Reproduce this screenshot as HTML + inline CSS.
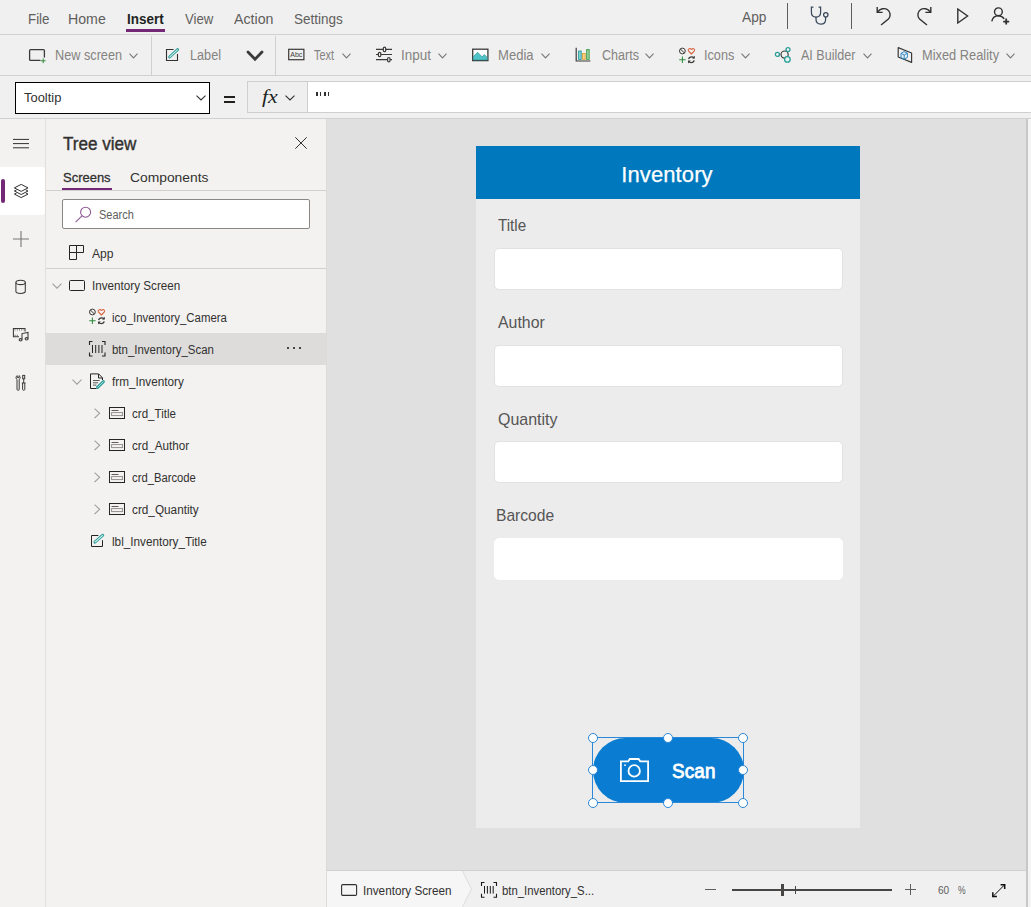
<!DOCTYPE html>
<html>
<head>
<meta charset="utf-8">
<title>Power Apps</title>
<style>
*{box-sizing:border-box;margin:0;padding:0}
html,body{width:1031px;height:907px;overflow:hidden;background:#f3f2f1;font-family:"Liberation Sans",sans-serif;color:#323130}
.abs{position:absolute}
.t{position:absolute;white-space:nowrap;line-height:1}
svg{position:absolute;overflow:visible}
#menubar{left:0;top:0;width:1031px;height:35px;background:#f0f0f0;border-bottom:1px solid #d2d0ce}
#ribbon{left:0;top:35px;width:1031px;height:41px;background:#f0f0f0;border-bottom:1px solid #d2d0ce}
#fbar{left:0;top:76px;width:1031px;height:43px;background:#f0f0f0;border-bottom:1px solid #d2d0ce}
.m{font-size:14px;color:#605e5c;top:12px}
.r{font-size:14px;color:#858381;top:48px}
.vsep{position:absolute;width:1px;background:#d2d0ce}
.cv{width:9px;height:6px}
#rail{left:0;top:119px;width:46px;height:788px;background:#f3f2f1;border-right:1px solid #e1dfdd}
#tree{left:46px;top:119px;width:281px;height:788px;background:#f3f2f1;border-right:1px solid #dddbd9}
.row{font-size:12.5px;color:#323130}
#canvas{left:327px;top:119px;width:704px;height:752px;background:#e0e0e0}
#status{left:327px;top:870px;width:704px;height:37px;background:#f0f0f0;border-top:1px solid #d2d0ce}
#screen{left:476px;top:146px;width:384px;height:682px;background:#ececec}
#hdr{left:476px;top:146px;width:384px;height:53px;background:#0078bd}
.inp{position:absolute;left:494px;width:349px;height:42px;background:#fff;border:1px solid #e2e2e2;border-radius:5px}
.fl{font-size:17px;color:#555;left:497px}
.h{position:absolute;width:10px;height:10px;border-radius:50%;background:#fff;border:1.2px solid #2b88d8}
</style>
</head>
<body>
<svg width="0" height="0" style="left:-10px;top:-10px"><defs>
<path id="chev" d="M0.5 0.7 L4.5 4.9 L8.5 0.7" fill="none" stroke-width="1.1"/>
</defs></svg>

<!-- MENU BAR -->
<div id="menubar" class="abs"></div>
<div class="t m" style="left:27.6px;transform:scaleX(0.952);transform-origin:0 0">File</div>
<div class="t m" style="left:68.2px;transform:scaleX(1.011);transform-origin:0 0">Home</div>
<div class="t m" style="left:127.4px;font-weight:bold;color:#201f1e;transform:scaleX(0.961);transform-origin:0 0">Insert</div>
<div class="abs" style="left:126px;top:29px;width:39px;height:3px;background:#742774"></div>
<div class="t m" style="left:185.2px;transform:scaleX(0.939);transform-origin:0 0">View</div>
<div class="t m" style="left:234.2px;transform:scaleX(1.014);transform-origin:0 0">Action</div>
<div class="t m" style="left:294.2px;transform:scaleX(0.963);transform-origin:0 0">Settings</div>
<div class="t m" style="left:741.6px;top:10px;transform:scaleX(0.979);transform-origin:0 0">App</div>
<div class="vsep" style="left:787px;top:3px;height:26px;background:#605e5c"></div>
<div class="vsep" style="left:851px;top:3px;height:26px;background:#605e5c"></div>
<!-- stethoscope -->
<svg style="left:810px;top:6px" width="20" height="19" viewBox="0 0 20 19">
<g fill="none" stroke="#3a4a5c" stroke-width="1.25" stroke-linecap="round">
<path d="M3 1 H1.4 V6.2 C1.4 9.4 3.6 11 6 11 C8.4 11 10.6 9.4 10.6 6.2 V1 H9"/>
<path d="M6 11 V13.2 C6 16.4 8 18 10.8 18 C13.6 18 15.6 16.2 15.6 13.4 V11.2"/>
<circle cx="15.8" cy="8.8" r="2.2"/>
</g></svg>
<!-- undo -->
<svg style="left:876px;top:6px" width="16" height="20" viewBox="0 0 16 20">
<g fill="none" stroke="#323130" stroke-width="1.4" stroke-linecap="butt">
<path d="M1.2 1 V6.4 H6.6"/>
<path d="M1.6 6 C4 2.6 8.6 1.6 11.6 3.8 C14.6 6 15 10 12.4 13 L5 19"/>
</g></svg>
<!-- redo -->
<svg style="left:916px;top:6px" width="16" height="20" viewBox="0 0 16 20">
<g fill="none" stroke="#323130" stroke-width="1.4" stroke-linecap="butt" transform="translate(16,0) scale(-1,1)">
<path d="M1.2 1 V6.4 H6.6"/>
<path d="M1.6 6 C4 2.6 8.6 1.6 11.6 3.8 C14.6 6 15 10 12.4 13 L5 19"/>
</g></svg>
<!-- play -->
<svg style="left:957px;top:8px" width="12" height="16" viewBox="0 0 12 16">
<path d="M0.8 1 L10.6 8 L0.8 15 Z" fill="none" stroke="#323130" stroke-width="1.4" stroke-linejoin="miter"/></svg>
<!-- user+ -->
<svg style="left:991px;top:7px" width="20" height="19" viewBox="0 0 20 19">
<g fill="none" stroke="#323130" stroke-width="1.4">
<circle cx="7.4" cy="4.8" r="3.9"/>
<path d="M0.8 14.4 C1.6 10.6 4.2 8.8 7.4 8.8 C10 8.8 12 10 13.2 12"/>
</g>
<path d="M15.2 11.6 V17.6 M12.2 14.6 H18.2" stroke="#323130" stroke-width="1.8" fill="none"/>
</svg>

<!-- RIBBON -->
<div id="ribbon" class="abs"></div>
<!-- new screen icon -->
<svg style="left:28px;top:48px" width="18" height="16" viewBox="0 0 18 16">
<path d="M12.5 12.4 H2.6 Q1.6 12.4 1.6 11.4 V2.6 Q1.6 1.6 2.6 1.6 H15.4 Q16.4 1.6 16.4 2.6 V9.5" fill="none" stroke="#3b3a39" stroke-width="1.3"/>
<path d="M15.2 10.4 V15.2 M12.8 12.8 H17.6" stroke="#2e8b3d" stroke-width="1" fill="none"/>
</svg>
<div class="t r" style="left:54.8px;transform:scaleX(0.907);transform-origin:0 0">New screen</div>
<svg class="cv" style="left:129px;top:53px" viewBox="0 0 9 6"><use href="#chev" stroke="#7a7876"/></svg>
<div class="vsep" style="left:151px;top:36px;height:39px"></div>
<!-- label icon -->
<svg style="left:165px;top:46px" width="16" height="17" viewBox="0 0 16 17">
<path d="M8.6 3.5 H1.5 V14.5 H12.5 V8" fill="none" stroke="#323130" stroke-width="1.1"/>
<path d="M4.6 11 L12.6 3.6" stroke="#2f9c98" stroke-width="2.9" stroke-linecap="round"/>
<path d="M4.8 10.8 L12.4 3.8" stroke="#c9efed" stroke-width="1.1" stroke-linecap="round"/>
</svg>
<div class="t r" style="left:189.6px;transform:scaleX(0.906);transform-origin:0 0">Label</div>
<svg style="left:246px;top:50px" width="18" height="12" viewBox="0 0 18 12">
<path d="M2 2 L9 9.2 L16 2" fill="none" stroke="#3b3a39" stroke-width="2.8" stroke-linecap="round" stroke-linejoin="miter"/></svg>
<div class="vsep" style="left:275px;top:36px;height:39px"></div>
<!-- text icon -->
<svg style="left:288px;top:48px" width="17" height="13" viewBox="0 0 17 13">
<rect x="0.7" y="1.3" width="15.2" height="10.4" fill="none" stroke="#3b3a39" stroke-width="1.2"/>
<text x="8.3" y="9" font-family="Liberation Sans" font-size="7" text-anchor="middle" fill="#3b3a39">Abc</text>
</svg>
<div class="t r" style="left:314.4px;transform:scaleX(0.781);transform-origin:0 0">Text</div>
<svg class="cv" style="left:342px;top:53px" viewBox="0 0 9 6"><use href="#chev" stroke="#7a7876"/></svg>
<!-- input icon -->
<svg style="left:375px;top:46px" width="18" height="17" viewBox="0 0 18 17">
<g stroke="#3b3a39" stroke-width="1.2" fill="#f3f2f1">
<path d="M1 3.4 H17 M1 8.5 H17 M1 13.7 H17"/>
<rect x="8.3" y="1.2" width="2.4" height="4.4" rx="1.2"/>
<rect x="3.4" y="6.3" width="2.4" height="4.4" rx="1.2"/>
<rect x="12.6" y="11.5" width="2.4" height="4.4" rx="1.2"/>
</g></svg>
<div class="t r" style="left:401.4px;transform:scaleX(0.964);transform-origin:0 0">Input</div>
<svg class="cv" style="left:438px;top:53px" viewBox="0 0 9 6"><use href="#chev" stroke="#7a7876"/></svg>
<!-- media icon -->
<svg style="left:472px;top:48px" width="17" height="14" viewBox="0 0 17 14">
<rect x="0.7" y="1.2" width="15.2" height="11.4" fill="#fff" stroke="#3b3a39" stroke-width="1.3"/>
<path d="M1.3 12 V8.6 L5.6 4.2 L10 8.8 L12.4 6.6 L15.3 9.6 V12 Z" fill="#4fc3c7" stroke="#2a8a8c" stroke-width="0.6"/>
</svg>
<div class="t r" style="left:497.6px;transform:scaleX(0.933);transform-origin:0 0">Media</div>
<svg class="cv" style="left:541px;top:53px" viewBox="0 0 9 6"><use href="#chev" stroke="#7a7876"/></svg>
<!-- charts icon -->
<svg style="left:575px;top:47px" width="16" height="15" viewBox="0 0 16 15">
<path d="M1.2 0.8 V14 H15.4" fill="none" stroke="#3b3a39" stroke-width="1.2"/>
<rect x="3.6" y="4" width="2.6" height="8.4" fill="#7fd3d3" stroke="#1f8f8f" stroke-width="0.8"/>
<rect x="7.6" y="6.4" width="2.6" height="6" fill="#f9d28a" stroke="#e09a2a" stroke-width="0.8"/>
<rect x="11.6" y="2.4" width="2.6" height="10" fill="#8fce98" stroke="#3a9a4a" stroke-width="0.8"/>
</svg>
<div class="t r" style="left:601.8px;transform:scaleX(0.898);transform-origin:0 0">Charts</div>
<svg class="cv" style="left:645px;top:53px" viewBox="0 0 9 6"><use href="#chev" stroke="#7a7876"/></svg>
<!-- icons icon -->
<svg style="left:678px;top:47px" width="18" height="17" viewBox="0 0 18 17">
<circle cx="4.4" cy="4" r="2.9" fill="none" stroke="#3b3a39" stroke-width="1"/>
<path d="M2.4 2 L6.4 6" stroke="#3b3a39" stroke-width="1"/>
<path d="M13.4 7 L10.4 3.8 C9.6 2.4 11.4 0.6 13.4 2.4 C15.4 0.6 17.2 2.4 16.4 3.8 Z" fill="none" stroke="#d9613c" stroke-width="1.1" stroke-linejoin="round"/>
<path d="M4.4 9.6 V16 M1.2 12.8 H7.6" stroke="#2e8b3d" stroke-width="1.05" fill="none"/>
<g fill="none" stroke="#3b3a39" stroke-width="1.25">
<path d="M10.6 12 C11 10.4 12.4 9.8 13.6 9.8 C14.8 9.8 15.6 10.2 16.2 11"/>
<path d="M16.2 13.4 C15.8 15 14.4 15.6 13.2 15.6 C12 15.6 11.2 15.2 10.6 14.4"/>
</g>
<path d="M16.8 8.8 V11.6 H14 Z M10 16.4 V13.6 H12.8 Z" fill="#3b3a39"/>
</svg>
<div class="t r" style="left:704.0px;transform:scaleX(0.906);transform-origin:0 0">Icons</div>
<svg class="cv" style="left:741px;top:53px" viewBox="0 0 9 6"><use href="#chev" stroke="#7a7876"/></svg>
<!-- ai builder icon -->
<svg style="left:774px;top:46px" width="19" height="18" viewBox="0 0 19 18">
<circle cx="10.6" cy="8.6" r="3.6" fill="none" stroke="#3b3a39" stroke-width="1.2"/>
<circle cx="3.4" cy="8.4" r="2" fill="#f3f2f1" stroke="#2a9d98" stroke-width="1.3"/>
<circle cx="14" cy="3.6" r="2" fill="#f3f2f1" stroke="#2a9d98" stroke-width="1.3"/>
<circle cx="13.4" cy="13.4" r="2.8" fill="#e7f6f5" stroke="#2a9d98" stroke-width="1.3"/>
</svg>
<div class="t r" style="left:801.2px;transform:scaleX(0.895);transform-origin:0 0">AI Builder</div>
<svg class="cv" style="left:863px;top:53px" viewBox="0 0 9 6"><use href="#chev" stroke="#7a7876"/></svg>
<!-- mixed reality icon -->
<svg style="left:897px;top:46px" width="16" height="18" viewBox="0 0 16 18">
<path d="M1.2 1.6 L14.6 7 V16.4 L1.2 11 Z" fill="none" stroke="#3b3a39" stroke-width="1.2" stroke-linejoin="round"/>
<path d="M4 7.4 L7 5.6 L10.4 7.2 V11.4 L7.2 13.2 L4 11.6 Z M4 7.4 L7.2 9 L10.4 7.2 M7.2 9 V13.2" fill="none" stroke="#2b88c8" stroke-width="1"/>
</svg>
<div class="t r" style="left:922.2px;transform:scaleX(0.917);transform-origin:0 0">Mixed Reality</div>
<svg class="cv" style="left:1006px;top:53px" viewBox="0 0 9 6"><use href="#chev" stroke="#7a7876"/></svg>

<!-- FORMULA BAR -->
<div id="fbar" class="abs"></div>
<div class="abs" style="left:15px;top:82px;width:195px;height:32px;background:#fff;border:1px solid #000"></div>
<div class="t" style="left:24.4px;top:91px;font-size:13px;color:#323130;transform:scaleX(0.994);transform-origin:0 0">Tooltip</div>
<svg style="left:196px;top:95px" width="10" height="6" viewBox="0 0 10 6"><path d="M0.5 0.6 L5 5 L9.5 0.6" fill="none" stroke="#323130" stroke-width="1.1"/></svg>
<div class="abs" style="left:224px;top:96px;width:11px;height:2px;background:#201f1e"></div>
<div class="abs" style="left:224px;top:101px;width:11px;height:2px;background:#201f1e"></div>
<div class="abs" style="left:247px;top:81px;width:61px;height:32px;background:#efefef;border:1px solid #cfcfcf"></div>
<div class="t" style="left:262px;top:87px;font-family:'Liberation Serif',serif;font-style:italic;font-size:19.5px;color:#201f1e;transform:scaleX(1.12);transform-origin:0 0">fx</div>
<svg style="left:284.5px;top:94.5px" width="10" height="6" viewBox="0 0 10 6"><path d="M0.5 0.6 L5 5 L9.5 0.6" fill="none" stroke="#323130" stroke-width="1.1"/></svg>
<div class="abs" style="left:307px;top:81px;width:724px;height:32px;background:#fff;border:1px solid #cfcfcf;border-right:0"></div>
<div class="abs" style="left:316px;top:92px;width:1.5px;height:3.5px;background:#323130"></div>
<div class="abs" style="left:319.5px;top:92px;width:1.5px;height:3.5px;background:#323130"></div>
<div class="abs" style="left:324px;top:92px;width:1.5px;height:3.5px;background:#323130"></div>
<div class="abs" style="left:327.5px;top:92px;width:1.5px;height:3.5px;background:#323130"></div>

<!-- LEFT RAIL -->
<div id="rail" class="abs"></div>
<div class="abs" style="left:0;top:167px;width:45px;height:48px;background:#fff;border-radius:0 3px 3px 0"></div>
<div class="abs" style="left:1.2px;top:179px;width:3.8px;height:24px;background:#742774;border-radius:2px"></div>
<!-- hamburger -->
<svg style="left:13px;top:138px" width="16" height="11" viewBox="0 0 16 11"><path d="M0 1.4 H16 M0 5.6 H16 M0 9.8 H16" stroke="#323130" stroke-width="1"/></svg>
<!-- layers -->
<svg style="left:13px;top:183px" width="17" height="16" viewBox="0 0 17 16">
<g fill="none" stroke="#323130" stroke-width="1" stroke-linejoin="round">
<path d="M8.2 1.4 L15 4.9 L8.2 8.4 L1.4 4.9 Z"/>
<path d="M3.6 6.9 L1.4 8 L8.2 11.5 L15 8 L12.8 6.9"/>
<path d="M3.6 10 L1.4 11.1 L8.2 14.6 L15 11.1 L12.8 10"/>
</g></svg>
<!-- plus -->
<svg style="left:13px;top:231px" width="16" height="16" viewBox="0 0 16 16"><path d="M8 0 V16 M0 8 H16" stroke="#797775" stroke-width="1.1"/></svg>
<!-- cylinder -->
<svg style="left:15px;top:279px" width="12" height="16" viewBox="0 0 12 16">
<g fill="none" stroke="#3b3a39" stroke-width="1.05">
<ellipse cx="5.6" cy="3.4" rx="4.7" ry="2.2"/>
<path d="M0.9 3.4 V12.2 C0.9 13.4 3 14.4 5.6 14.4 C8.2 14.4 10.3 13.4 10.3 12.2 V3.4"/>
</g></svg>
<!-- media -->
<svg style="left:12px;top:327px" width="18" height="16" viewBox="0 0 18 16">
<g fill="none" stroke="#3b3a39" stroke-width="1.05">
<path d="M7 9.8 H1.4 V1.4 H13 V4.6"/>
<path d="M2.6 2.9 H11.8 M2.6 8.3 H7" stroke-dasharray="1 1.2" stroke-width="0.9"/>
<path d="M10 12.4 V6.6 L16 5.4 V11.4"/>
<ellipse cx="8.6" cy="12.8" rx="1.5" ry="1.2"/>
<ellipse cx="14.6" cy="11.8" rx="1.5" ry="1.2"/>
</g></svg>
<!-- tools -->
<svg style="left:15px;top:374px" width="12" height="18" viewBox="0 0 12 18">
<g fill="none" stroke="#3b3a39" stroke-width="1">
<path d="M2.2 1.6 C0.6 2.4 0.6 4.8 2 5.4 V15.4 C2 16.6 4.2 16.6 4.2 15.4 V5.4 C5.6 4.8 5.6 2.4 4 1.6 V3.6 H2.2 Z"/>
<rect x="7.7" y="1.4" width="2" height="3.4"/>
<path d="M8.7 4.8 V9 M6.8 9 H10.6"/>
<path d="M7.6 9 V15.4 C7.6 16.6 9.8 16.6 9.8 15.4 V9"/>
</g></svg>

<!-- TREE VIEW -->
<div id="tree" class="abs"></div>
<div class="t" style="left:62.8px;top:135px;font-size:18px;font-weight:normal;-webkit-text-stroke:0.4px #323130;color:#323130;letter-spacing:0px;transform:scaleX(0.949);transform-origin:0 0">Tree view</div>
<svg style="left:295px;top:137px" width="12" height="12" viewBox="0 0 12 12"><path d="M0.3 0.3 L11.7 11.7 M11.7 0.3 L0.3 11.7" stroke="#323130" stroke-width="1"/></svg>
<div class="t" style="left:63.0px;top:171px;font-size:13.5px;font-weight:normal;-webkit-text-stroke:0.3px #323130;color:#323130;letter-spacing:0px;transform:scaleX(0.961);transform-origin:0 0">Screens</div>
<div class="abs" style="left:62px;top:188px;width:50px;height:2px;background:#742774"></div>
<div class="t" style="left:130.4px;top:171px;font-size:13.5px;color:#323130;transform:scaleX(1.025);transform-origin:0 0">Components</div>
<div class="abs" style="left:46px;top:190px;width:280px;height:1px;background:#d2d0ce"></div>
<div class="abs" style="left:62px;top:199px;width:248px;height:30px;background:#fff;border:1px solid #8a8886;border-radius:2px"></div>
<svg style="left:75px;top:206px" width="17" height="17" viewBox="0 0 17 17"><g fill="none" stroke="#8a5590" stroke-width="1.05"><circle cx="10.6" cy="6.2" r="5"/><path d="M7 9.8 L0.6 16.2"/></g></svg>
<div class="t" style="left:99.4px;top:209px;font-size:12px;color:#605e5c;transform:scaleX(0.916);transform-origin:0 0">Search</div>
<!-- app icon -->
<svg style="left:69px;top:245px" width="16" height="16" viewBox="0 0 16 16"><g fill="none" stroke="#252423" stroke-width="1"><path d="M0.5 0.5 H14.5 V7.5 H7.5 V14.5 H0.5 Z"/><path d="M7.5 0.5 V7.5 M0.5 7.5 H7.5"/></g></svg>
<div class="t row" style="left:92.4px;top:248px;transform:scaleX(0.969);transform-origin:0 0">App</div>
<div class="abs" style="left:46px;top:268px;width:280px;height:1px;background:#d2d0ce"></div>
<div class="abs" style="left:46px;top:333px;width:280px;height:32px;background:#dddcdb"></div>
<!-- Inventory Screen -->
<svg style="left:52px;top:283px" width="10" height="6" viewBox="0 0 10 6"><path d="M0.5 0.6 L5 5.2 L9.5 0.6" fill="none" stroke="#a19f9d" stroke-width="1.1"/></svg>
<svg style="left:69px;top:280px" width="17" height="12" viewBox="0 0 17 12"><rect x="0.5" y="0.5" width="15" height="10" rx="1" fill="none" stroke="#252423" stroke-width="1"/></svg>
<div class="t row" style="left:92.4px;top:280px;transform:scaleX(0.935);transform-origin:0 0">Inventory Screen</div>
<!-- ico row icon -->
<svg style="left:88px;top:308px" width="18" height="17" viewBox="0 0 18 17">
<circle cx="4.4" cy="4" r="2.9" fill="none" stroke="#3b3a39" stroke-width="1"/>
<path d="M2.4 2 L6.4 6" stroke="#3b3a39" stroke-width="1"/>
<path d="M13.4 7 L10.4 3.8 C9.6 2.4 11.4 0.6 13.4 2.4 C15.4 0.6 17.2 2.4 16.4 3.8 Z" fill="none" stroke="#d9613c" stroke-width="1.1" stroke-linejoin="round"/>
<path d="M4.4 9.6 V16 M1.2 12.8 H7.6" stroke="#2e8b3d" stroke-width="1.05" fill="none"/>
<g fill="none" stroke="#3b3a39" stroke-width="1.25">
<path d="M10.6 12 C11 10.4 12.4 9.8 13.6 9.8 C14.8 9.8 15.6 10.2 16.2 11"/>
<path d="M16.2 13.4 C15.8 15 14.4 15.6 13.2 15.6 C12 15.6 11.2 15.2 10.6 14.4"/>
</g>
<path d="M16.8 8.8 V11.6 H14 Z M10 16.4 V13.6 H12.8 Z" fill="#3b3a39"/>
</svg>
<div class="t row" style="left:112.4px;top:312px;transform:scaleX(0.914);transform-origin:0 0">ico_Inventory_Camera</div>
<!-- btn row icon -->
<svg style="left:89px;top:341px" width="17" height="16" viewBox="0 0 17 16">
<g fill="none" stroke="#252423" stroke-width="1">
<path d="M3.5 0.5 H0.5 V4 M13 0.5 H16 V4 M3.5 15 H0.5 V11.5 M13 15 H16 V11.5" stroke-width="1.1"/>
<path d="M3.5 4 V12 M6.7 4 V12 M9.9 4 V12 M13 4 V12"/>
</g></svg>
<div class="t row" style="left:112.4px;top:344px;transform:scaleX(0.917);transform-origin:0 0">btn_Inventory_Scan</div>
<div class="abs" style="left:287px;top:347px;width:2px;height:2px;background:#484644"></div>
<div class="abs" style="left:293px;top:347px;width:2px;height:2px;background:#484644"></div>
<div class="abs" style="left:299px;top:347px;width:2px;height:2px;background:#484644"></div>
<!-- frm row -->
<svg style="left:72px;top:379px" width="10" height="6" viewBox="0 0 10 6"><path d="M0.5 0.6 L5 5.2 L9.5 0.6" fill="none" stroke="#a19f9d" stroke-width="1.1"/></svg>
<svg style="left:90px;top:373px" width="16" height="17" viewBox="0 0 16 17">
<path d="M6.6 15.5 H0.5 V0.9 H8.6 L12.5 4.8 V7 M8.5 1 V5 H12.4" fill="none" stroke="#252423" stroke-width="1"/>
<path d="M3 7.5 H9.6 M3 9.8 H8 M3 12.1 H6.4" stroke="#484644" stroke-width="0.9"/>
<path d="M7.6 14.4 L13.4 8.6" stroke="#2f9c98" stroke-width="2.9" stroke-linecap="round"/>
<path d="M7.8 14.2 L13.2 8.8" stroke="#9fe0dc" stroke-width="1" stroke-linecap="round"/>
</svg>
<div class="t row" style="left:112.4px;top:376px;transform:scaleX(0.939);transform-origin:0 0">frm_Inventory</div>
<svg style="left:94px;top:408px" width="7" height="11" viewBox="0 0 7 11"><path d="M0.6 0.6 L5.6 5.3 L0.6 10" fill="none" stroke="#a19f9d" stroke-width="1.1"/></svg>
<svg style="left:109px;top:407px" width="17" height="12" viewBox="0 0 17 12"><g fill="none" stroke="#252423" stroke-width="1"><rect x="0.5" y="0.5" width="15" height="11"/><path d="M2.6 3.5 H9.4" stroke="#605e5c"/><rect x="2.6" y="5.6" width="11" height="3" stroke="#8a8886" stroke-width="0.9"/></g></svg>
<svg style="left:94px;top:440px" width="7" height="11" viewBox="0 0 7 11"><path d="M0.6 0.6 L5.6 5.3 L0.6 10" fill="none" stroke="#a19f9d" stroke-width="1.1"/></svg>
<svg style="left:109px;top:439px" width="17" height="12" viewBox="0 0 17 12"><g fill="none" stroke="#252423" stroke-width="1"><rect x="0.5" y="0.5" width="15" height="11"/><path d="M2.6 3.5 H9.4" stroke="#605e5c"/><rect x="2.6" y="5.6" width="11" height="3" stroke="#8a8886" stroke-width="0.9"/></g></svg>
<svg style="left:94px;top:472px" width="7" height="11" viewBox="0 0 7 11"><path d="M0.6 0.6 L5.6 5.3 L0.6 10" fill="none" stroke="#a19f9d" stroke-width="1.1"/></svg>
<svg style="left:109px;top:471px" width="17" height="12" viewBox="0 0 17 12"><g fill="none" stroke="#252423" stroke-width="1"><rect x="0.5" y="0.5" width="15" height="11"/><path d="M2.6 3.5 H9.4" stroke="#605e5c"/><rect x="2.6" y="5.6" width="11" height="3" stroke="#8a8886" stroke-width="0.9"/></g></svg>
<svg style="left:94px;top:504px" width="7" height="11" viewBox="0 0 7 11"><path d="M0.6 0.6 L5.6 5.3 L0.6 10" fill="none" stroke="#a19f9d" stroke-width="1.1"/></svg>
<svg style="left:109px;top:503px" width="17" height="12" viewBox="0 0 17 12"><g fill="none" stroke="#252423" stroke-width="1"><rect x="0.5" y="0.5" width="15" height="11"/><path d="M2.6 3.5 H9.4" stroke="#605e5c"/><rect x="2.6" y="5.6" width="11" height="3" stroke="#8a8886" stroke-width="0.9"/></g></svg>
<div class="t row" style="left:132.4px;top:408px;transform:scaleX(0.925);transform-origin:0 0">crd_Title</div>
<div class="t row" style="left:132.4px;top:440px;transform:scaleX(0.934);transform-origin:0 0">crd_Author</div>
<div class="t row" style="left:132.4px;top:472px;transform:scaleX(0.901);transform-origin:0 0">crd_Barcode</div>
<div class="t row" style="left:132.4px;top:504px;transform:scaleX(0.942);transform-origin:0 0">crd_Quantity</div>
<!-- lbl row -->
<svg style="left:91px;top:532px" width="15" height="16" viewBox="0 0 15 16">
<path d="M7.4 3.5 H0.5 V14.5 H11.5 V8.2" fill="none" stroke="#252423" stroke-width="1"/>
<path d="M3.9 10.2 L11.8 3.2" stroke="#2f9c98" stroke-width="2.9" stroke-linecap="round"/>
<path d="M4.1 10 L11.6 3.4" stroke="#c9efed" stroke-width="1.1" stroke-linecap="round"/>
</svg>
<div class="t row" style="left:112.4px;top:536px;transform:scaleX(0.938);transform-origin:0 0">lbl_Inventory_Title</div>

<!-- CANVAS -->
<div id="canvas" class="abs"></div>
<div id="screen" class="abs"></div>
<div id="hdr" class="abs"></div>
<div class="t" style="left:475px;width:384px;text-align:center;top:164px;font-size:22px;color:#fff;letter-spacing:0.1px;-webkit-text-stroke:0.25px #fff">Inventory</div>
<div class="t fl" style="left:497.8px;top:216.6px;transform:scaleX(0.895);transform-origin:0 0">Title</div>
<div class="inp" style="top:248px"></div>
<div class="t fl" style="left:497.8px;top:313.6px;transform:scaleX(0.933);transform-origin:0 0">Author</div>
<div class="inp" style="top:345px"></div>
<div class="t fl" style="left:497.8px;top:410.6px;transform:scaleX(0.939);transform-origin:0 0">Quantity</div>
<div class="inp" style="top:441px"></div>
<div class="t fl" style="left:496.2px;top:506.6px;transform:scaleX(0.919);transform-origin:0 0">Barcode</div>
<div class="inp" style="top:538px;border-color:#fff"></div>

<!-- SCAN BUTTON -->
<div class="abs" style="left:593px;top:737.5px;width:150.5px;height:65px;border-radius:32.5px;background:#0a7cd1"></div>
<svg style="left:620px;top:758px" width="29" height="25" viewBox="0 0 29 25">
<g fill="none" stroke="#fff" stroke-width="1.8" stroke-linejoin="miter">
<path d="M0.9 3.3 H8.2 L9.8 1 H18.6 L20.2 3.3 H28.1 V23.2 H0.9 Z"/>
<circle cx="14.2" cy="12.9" r="5.7"/>
</g><circle cx="5" cy="7.2" r="0.9" fill="#fff"/></svg>
<div class="t" style="left:672.4px;top:761px;font-size:20px;font-weight:normal;-webkit-text-stroke:0.8px #fff;color:#fff;letter-spacing:0.2px;transform:scaleX(0.942);transform-origin:0 0">Scan</div>
<div class="abs" style="left:592px;top:737px;width:151.5px;height:66px;border:1px solid #2b88d8"></div>
<div class="h" style="left:587.5px;top:732.5px"></div>
<div class="h" style="left:663px;top:732.5px"></div>
<div class="h" style="left:738px;top:732.5px"></div>
<div class="h" style="left:587.5px;top:765px"></div>
<div class="h" style="left:738px;top:765px"></div>
<div class="h" style="left:587.5px;top:797.5px"></div>
<div class="h" style="left:663px;top:797.5px"></div>
<div class="h" style="left:738px;top:797.5px"></div>

<!-- STATUS BAR -->
<div id="status" class="abs"></div>
<svg style="left:327px;top:871px" width="150" height="36" viewBox="0 0 150 36">
<path d="M0 0 H135.5 L144.5 18 L135.5 36 H0 Z" fill="#f6f6f6"/>
<path d="M135.5 0 L144.5 18 L135.5 36" fill="none" stroke="#dcdcdc" stroke-width="1"/>
</svg>
<svg style="left:341px;top:884px" width="17" height="13" viewBox="0 0 17 13"><rect x="0.6" y="0.6" width="15" height="10.8" rx="1.2" fill="none" stroke="#323130" stroke-width="1.1"/></svg>
<div class="t" style="left:362.6px;top:885px;font-size:12.5px;color:#323130;transform:scaleX(0.937);transform-origin:0 0">Inventory Screen</div>
<svg style="left:481px;top:882px" width="17" height="16" viewBox="0 0 17 16">
<g fill="none" stroke="#1b1a19" stroke-width="1">
<path d="M3.5 0.5 H0.5 V4 M12.5 0.5 H15.5 V4 M3.5 15.3 H0.5 V11.8 M12.5 15.3 H15.5 V11.8" stroke-width="1.1"/>
<path d="M3.5 4 V11.6 M6.4 4 V11.6 M9.3 4 V11.6 M12.2 4 V11.6"/>
</g></svg>
<div class="t" style="left:502.2px;top:885px;font-size:12.5px;color:#323130;transform:scaleX(0.908);transform-origin:0 0">btn_Inventory_S...</div>
<div class="abs" style="left:705px;top:889px;width:11px;height:1px;background:#605e5c"></div>
<div class="abs" style="left:732px;top:889px;width:160px;height:2px;background:#484644"></div>
<div class="abs" style="left:781px;top:884px;width:3px;height:12px;background:#484644"></div>
<div class="abs" style="left:795px;top:886px;width:1px;height:8px;background:#484644"></div>
<svg style="left:905px;top:884px" width="11" height="11" viewBox="0 0 11 11"><path d="M5.5 0 V11 M0 5.5 H11" stroke="#605e5c" stroke-width="1"/></svg>
<div class="t" style="left:938.0px;top:885px;font-size:11px;color:#605e5c;transform:scaleX(0.917);transform-origin:0 0">60</div>
<div class="t" style="left:958.2px;top:885px;font-size:11px;color:#605e5c;transform:scaleX(0.779);transform-origin:0 0">%</div>
<svg style="left:992px;top:884px" width="14" height="14" viewBox="0 0 14 14"><g fill="none" stroke="#111" ><path d="M1 12.4 L12.6 0.8" stroke-width="1"/><path d="M8.6 0.8 H12.7 V4.9 M0.8 8.3 V12.5 H4.9" stroke-width="1.5"/></g></svg>
<div class="abs" style="left:1026px;top:119px;width:2px;height:788px;background:#c8c8c8"></div>
<div class="abs" style="left:1028px;top:119px;width:3px;height:788px;background:#f4f4f4"></div>
</body>
</html>
